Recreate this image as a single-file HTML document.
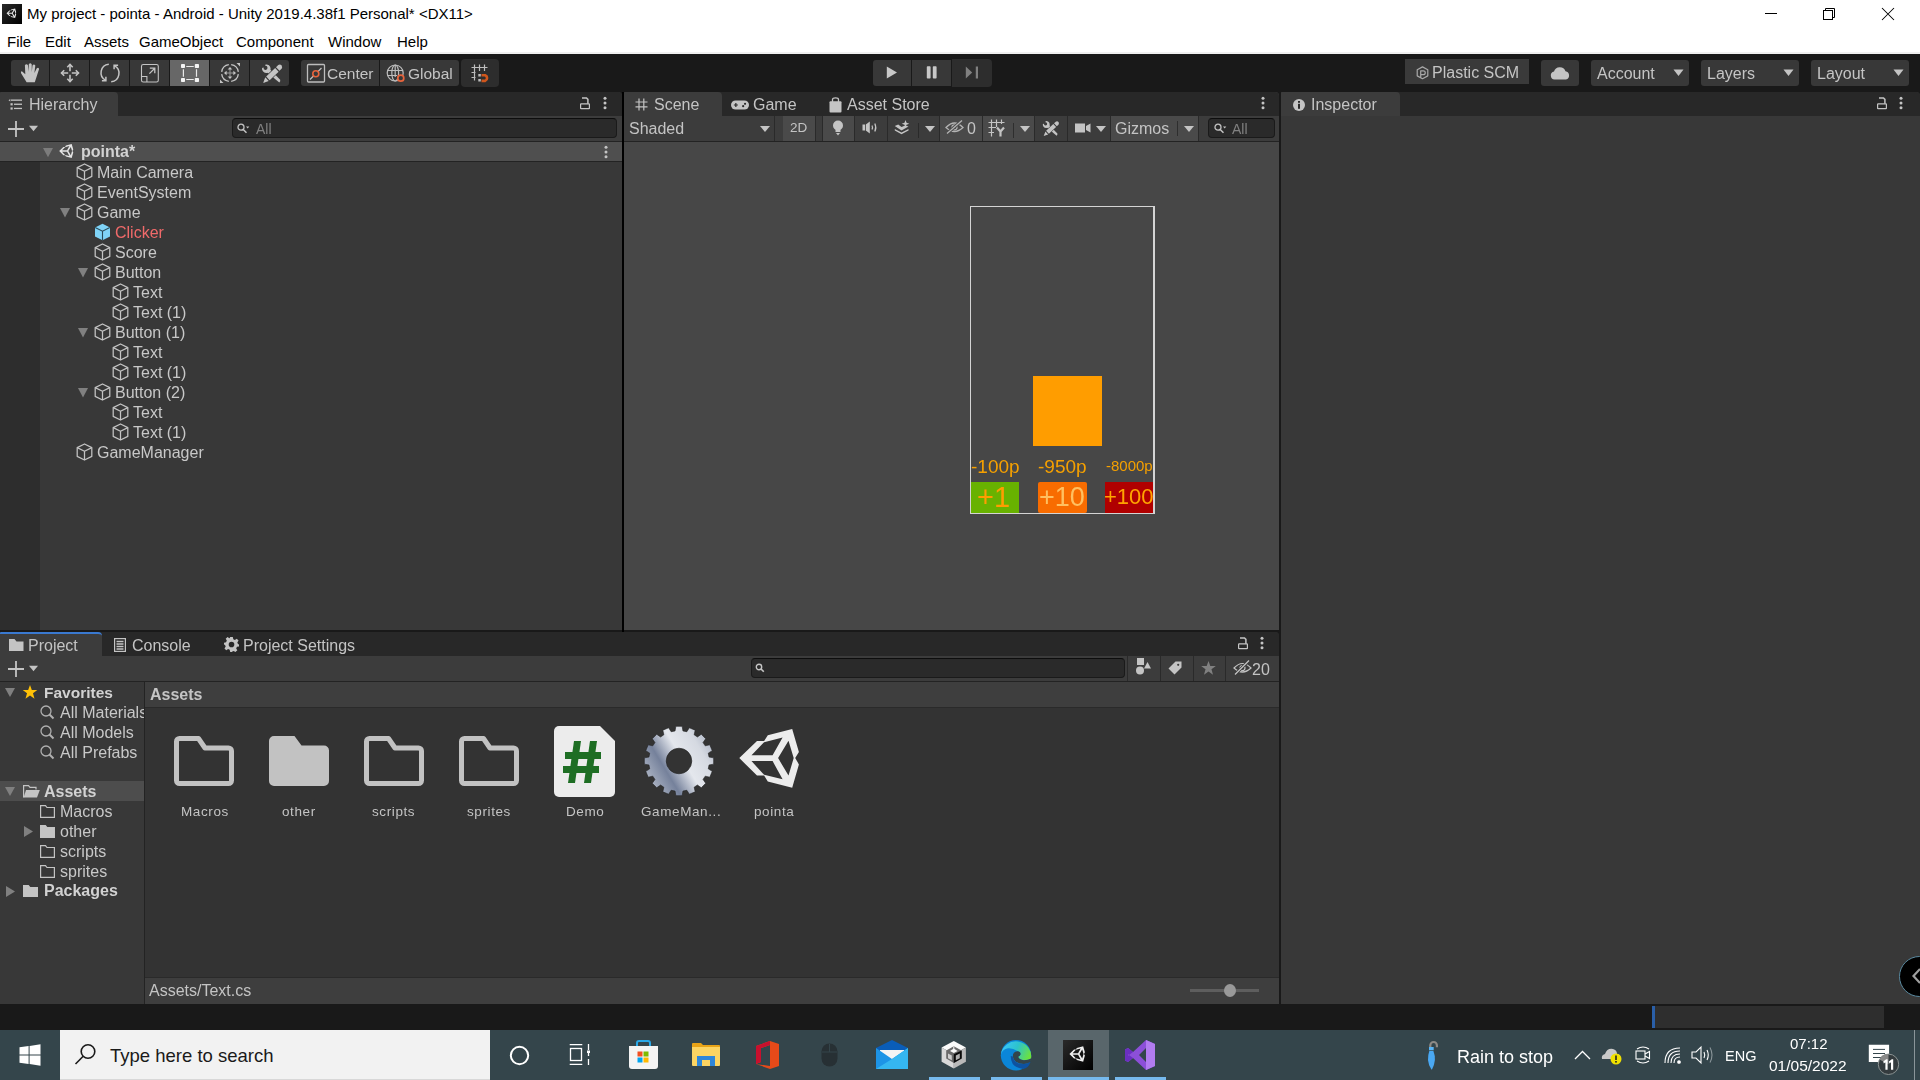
<!DOCTYPE html>
<html><head><meta charset="utf-8">
<style>
*{box-sizing:border-box}
html,body{margin:0;padding:0}
body{width:1920px;height:1080px;overflow:hidden;position:relative;background:#191919;font-family:"Liberation Sans",sans-serif;color:#c4c4c4}
.a{position:absolute}
.t{position:absolute;white-space:pre;line-height:1}
svg{position:absolute;overflow:visible;z-index:2}
.t{z-index:2;will-change:transform}
#titlebar{left:0;top:0;width:1920px;height:54px;background:#fff}
#toolbar{left:0;top:54px;width:1920px;height:38px;background:#191919}
.tb{position:absolute;top:60px;height:26px;background:#383838}
.dock{position:absolute;background:#282828;border-radius:1px 4px 0 0;overflow:hidden}
.tab{position:absolute;top:0;height:24px;background:#3c3c3c;border-radius:0 4px 0 0}
.ptool{position:absolute;left:0;right:0;top:24px;height:26px;background:#3c3c3c;border-bottom:1px solid #232323}
.lbl{font-size:16px;color:#c4c4c4}
</style></head>
<body>
<div id="titlebar" class="a"></div>
<div class="a" style="left:0;top:52px;width:1920px;height:2px;background:#f0f0f0"></div>
<!-- unity app icon -->
<div class="a" style="left:2px;top:4px;width:20px;height:20px;background:linear-gradient(135deg,#2a2a2a,#000)"></div>
<svg style="left:5.4px;top:7.2px" width="13" height="13" viewBox="0 0 80 80" fill="#e8e8e8"><use href="#unity"/></svg>
<div class="t" style="left:27px;top:6px;font-size:15px;color:#000;will-change:auto">My project - pointa - Android - Unity 2019.4.38f1 Personal* &lt;DX11&gt;</div>
<div class="t" style="left:7px;top:34px;font-size:15px;color:#000;will-change:auto">File</div>
<div class="t" style="left:45px;top:34px;font-size:15px;color:#000;will-change:auto">Edit</div>
<div class="t" style="left:84px;top:34px;font-size:15px;color:#000;will-change:auto">Assets</div>
<div class="t" style="left:139px;top:34px;font-size:15px;color:#000;will-change:auto">GameObject</div>
<div class="t" style="left:236px;top:34px;font-size:15px;color:#000;will-change:auto">Component</div>
<div class="t" style="left:328px;top:34px;font-size:15px;color:#000;will-change:auto">Window</div>
<div class="t" style="left:397px;top:34px;font-size:15px;color:#000;will-change:auto">Help</div>

<div id="toolbar" class="a"></div>
<div class="tb" style="left:11px;width:38px;border-radius:3px 0 0 3px"></div>
<div class="tb" style="left:50px;width:39px"></div>
<div class="tb" style="left:90px;width:39px"></div>
<div class="tb" style="left:130px;width:39px"></div>
<div class="tb" style="left:170px;width:39px;background:#676767"></div>
<div class="tb" style="left:210px;width:39px"></div>
<div class="tb" style="left:250px;width:39px;border-radius:0 3px 3px 0"></div>
<div class="tb" style="left:301px;width:78px;border-radius:3px 0 0 3px"></div>
<div class="tb" style="left:380px;width:79px;border-radius:0 3px 3px 0"></div>
<div class="tb" style="left:461px;width:38px;top:59px;height:28px;background:#2d2d2d;border-radius:4px"></div>
<div class="t lbl" style="left:327px;top:66px;font-size:15.5px">Center</div>
<div class="t lbl" style="left:408px;top:66px;font-size:15.5px">Global</div>
<!-- toolbar icons -->
<svg style="left:20px;top:63px" width="20" height="20" viewBox="0 0 20 20"><path fill="#c4c4c4" d="M6.6 19.2L1.1 10.2Q0.4 8.5 1.9 8.3L5.3 11.2L4.9 2.2Q6.3 0.2 7.9 2.1L8.4 8.8L8.8 1.3Q10.2 -0.6 11.7 1.3L11.8 8.9L12.5 2.5Q14 0.6 15.3 2.6L14.4 10L16.8 5.3Q18.4 4 19.1 6L14.8 19.2Z"/></svg>
<svg style="left:60px;top:63px" width="20" height="20" viewBox="0 0 20 20" fill="none" stroke="#c4c4c4" stroke-width="1.6"><path d="M10 1.5V8.2M10 11.8V18.5M1.5 10H8.2M11.8 10H18.5"/><path d="M7.3 4.2L10 1.5L12.7 4.2M7.3 15.8L10 18.5L12.7 15.8M4.2 7.3L1.5 10L4.2 12.7M15.8 7.3L18.5 10L15.8 12.7"/></svg>
<svg style="left:100px;top:63px" width="20" height="20" viewBox="0 0 20 20" fill="none" stroke="#c4c4c4" stroke-width="1.5"><path d="M8.8 1.3 A8.5 8.5 0 0 0 5.8 17.4"/><path d="M1.9 17.7H5.9V13.7"/><path d="M11.2 18.7 A8.5 8.5 0 0 0 14.2 2.6"/><path d="M18.1 2.3H14.1V6.3"/></svg>
<svg style="left:140px;top:63px" width="20" height="20" viewBox="0 0 20 20" fill="none" stroke="#c4c4c4" stroke-width="1.1"><rect x="1.5" y="1.5" width="16.8" height="17.5" rx="1.8"/><path d="M1.5 13.5H6.9V19"/><path d="M9.4 10.6L14.8 5.2M9.8 5.2H14.8V10.2" stroke-width="1.3"/></svg>
<svg style="left:180px;top:63px" width="20" height="20" viewBox="0 0 20 20"><path d="M6.25 3.5H13.75M6.25 16.5H13.75M3.4 6.25V13.75M16.5 6.25V13.75" stroke="#e8e8e8" stroke-width="1.2" fill="none"/><g fill="#f4f4f4"><rect x="1" y="1" width="4" height="4" rx="0.8"/><rect x="14.8" y="1" width="4.2" height="4" rx="0.8"/><rect x="1" y="15" width="4" height="4" rx="0.8"/><rect x="14.8" y="15" width="4.2" height="4" rx="0.8"/></g></svg>
<svg style="left:220px;top:63px" width="20" height="20" viewBox="0 0 20 20"><circle cx="10" cy="10" r="8.4" fill="none" stroke="#c4c4c4" stroke-width="1.3" pathLength="54" stroke-dasharray="11 2.5" stroke-dashoffset="-1.25"/><path d="M10 5V15M5 10H15" stroke="#9a9a9a" stroke-width="1"/><g fill="#c4c4c4"><path d="M10 4L12.3 6.6H7.7Z"/><path d="M10 16L12.3 13.4H7.7Z"/><path d="M4 10L6.6 7.7V12.3Z"/><path d="M16 10L13.4 7.7V12.3Z"/><path d="M16.5 0L20 0V3.5Z"/><path d="M0 16.5V20H3.5Z"/></g></svg>
<svg style="left:261px;top:63px" width="20" height="20" viewBox="0 0 20 20"><g fill="#c4c4c4"><path d="M4.55 1.47A4.3 4.3 0 1 1 1.07 4.95L2.53 4.55A2 2 0 1 0 4.15 2.93Z"/><path d="M6.2 9.4L9.1 6.6L19.2 16.8Q19.6 18.3 18.3 19.6Z"/></g><g fill="#c4c4c4" stroke="#383838" stroke-width="1.3" paint-order="stroke" stroke-linejoin="round"><path d="M2.1 19.9L4.32 14.35L7.76 17.98Z"/><path d="M8.61 17.17L5.17 13.54L14.18 5.0L17.62 8.64Z"/><path d="M18.47 7.8L15.03 4.2L17.2 2.1Q19.1 0.8 20.6 2.5Q21.8 4.2 20.6 5.8Z"/></g></svg>
<svg style="left:306px;top:63px" width="20" height="20" viewBox="0 0 20 20" fill="none"><rect x="1.5" y="1.5" width="17" height="17.5" rx="1" stroke="#bdbdbd" stroke-width="1.3"/><path d="M4 16.5L8 12.5M11.5 9L15.5 5" stroke="#bdbdbd" stroke-width="1.3"/><circle cx="9.8" cy="10.8" r="3" stroke="#e8643c" stroke-width="1.6"/></svg>
<svg style="left:386px;top:64px" width="20" height="20" viewBox="0 0 20 20" fill="none" stroke="#bdbdbd" stroke-width="1.2"><circle cx="9.2" cy="9" r="8"/><ellipse cx="9.2" cy="9" rx="3.4" ry="8"/><path d="M1.5 6.5H17M1.5 11.5H11M9.2 1V13"/><circle cx="14.8" cy="14.2" r="3" stroke="#e8643c" stroke-width="1.7" fill="#383838"/></svg>
<svg style="left:470px;top:63px" width="22" height="20" viewBox="0 0 22 20"><path d="M4.5 1.5V17.5M9.5 1.5V8M14.5 1.5V8M1.5 4.5H17.5M1.5 9.5H5.5M1.5 14.5H5.5" stroke="#bdbdbd" stroke-width="1.2" fill="none"/><rect x="8.3" y="11" width="2.5" height="2.5" fill="#bdbdbd"/><rect x="8.3" y="16" width="2.5" height="2.5" fill="#bdbdbd"/><path d="M11.5 12.2H15.2A3.1 3.1 0 0 1 15.2 17.9H11.5" stroke="#d0561c" stroke-width="2.6" fill="none"/></svg>
<svg style="left:886px;top:66.3px" width="12" height="13" viewBox="0 0 12 13"><path d="M0.8 0.5V12.5L11 6.5Z" fill="#c8c8c8"/></svg>
<svg style="left:926px;top:66.3px" width="12" height="13" viewBox="0 0 12 13"><rect x="0.8" y="0.3" width="3.8" height="12.2" rx="0.8" fill="#c8c8c8"/><rect x="6.8" y="0.3" width="3.8" height="12.2" rx="0.8" fill="#c8c8c8"/></svg>
<svg style="left:965px;top:66.3px" width="14" height="13" viewBox="0 0 14 13"><path d="M0.8 0.5V12.5L7.2 6.5Z" fill="#808080"/><rect x="10.8" y="0.5" width="2.2" height="12" fill="#808080"/></svg>
<svg style="left:1416px;top:66px" width="13" height="14" viewBox="0 0 16 17" fill="none" stroke="#a8a8a8" stroke-width="1.5" stroke-linejoin="round"><path d="M8 1L14.5 4.5V12L8 15.5L1.5 12V4.5Z"/><path d="M5.8 14V5.8H9A2.4 2.4 0 0 1 9 10.6H5.8"/></svg>
<svg style="left:1550px;top:66px" width="20" height="14" viewBox="0 0 20 14"><path fill="#c4c4c4" d="M4.5 13.5A4 4 0 0 1 4 5.6A6 6 0 0 1 15.5 5.3A4.2 4.2 0 0 1 16 13.5Z"/></svg>
<svg style="left:1673px;top:69px" width="11" height="8" viewBox="0 0 11 8"><path d="M0.5 0.5H10.5L5.5 7Z" fill="#c4c4c4"/></svg>
<svg style="left:1783px;top:69px" width="11" height="8" viewBox="0 0 11 8"><path d="M0.5 0.5H10.5L5.5 7Z" fill="#c4c4c4"/></svg>
<svg style="left:1893px;top:69px" width="11" height="8" viewBox="0 0 11 8"><path d="M0.5 0.5H10.5L5.5 7Z" fill="#c4c4c4"/></svg>
<!-- window controls -->
<div class="a" style="left:1765px;top:13px;width:12px;height:1px;background:#000"></div>
<svg style="left:1822px;top:7px" width="14" height="14" viewBox="0 0 14 14" fill="none" stroke="#000" stroke-width="1"><rect x="1.5" y="3.5" width="9" height="9"/><path d="M3.5 3.5V1.5H12.5V10.5H10.5"/></svg>
<svg style="left:1881px;top:7px" width="14" height="14" viewBox="0 0 14 14" stroke="#000" stroke-width="1.05"><path d="M1 1L13 13M13 1L1 13"/></svg>

<div class="tb" style="left:873px;width:38px;border-radius:3px 0 0 3px"></div>
<div class="tb" style="left:912px;width:39px"></div>
<div class="tb" style="left:952px;width:40px;top:59px;height:28px;background:#2d2d2d;border-radius:0 4px 4px 0"></div>

<div class="tb" style="left:1405px;width:124px;top:59px;height:25px;background:#3a3a3a"></div>
<div class="tb" style="left:1541px;width:38px;border-radius:3px"></div>
<div class="tb" style="left:1591px;width:98px;border-radius:3px"></div>
<div class="tb" style="left:1701px;width:98px;border-radius:3px"></div>
<div class="tb" style="left:1811px;width:98px;border-radius:3px"></div>
<div class="t lbl" style="left:1432px;top:65px">Plastic SCM</div>
<div class="t lbl" style="left:1597px;top:66px">Account</div>
<div class="t lbl" style="left:1707px;top:66px">Layers</div>
<div class="t lbl" style="left:1817px;top:66px">Layout</div>

<!-- Hierarchy dock -->
<div class="dock" style="left:0;top:92px;width:622px;height:538px;background:#383838">
  <div class="a" style="left:0;top:0;width:622px;height:24px;background:#282828"></div>
  <div class="tab" style="left:0;width:118px"></div>
  <div class="ptool"></div>
  <div class="a" style="left:0;top:50px;width:622px;height:20px;background:#4f4f4f;border-bottom:1px solid #232323"></div>
  <div class="a" style="left:0;top:70px;width:40px;height:468px;background:#2d2d2d"></div>
</div>
<div class="t lbl" style="left:29px;top:97px">Hierarchy</div>
<svg style="left:0;top:0" width="0" height="0"><defs>
<symbol id="cube" viewBox="0 0 17 18"><g fill="none" stroke="#c4c4c4" stroke-width="1.25" stroke-linejoin="round"><path d="M8.5 1L15.8 4.6V13.4L8.5 17L1.2 13.4V4.6Z"/><path d="M1.2 4.6L8.5 8.2L15.8 4.6M8.5 8.2V17"/></g></symbol>
<symbol id="cubeb" viewBox="0 0 17 18"><path d="M8.5 0.8L16 4.5V13.6L8.5 17.3L1 13.6V4.5Z" fill="#7fd3f7"/><path d="M1.2 4.6L8.5 8.2L15.8 4.6M8.5 8.2V17" fill="none" stroke="#2a4a58" stroke-width="1.1"/></symbol>
<symbol id="unity" viewBox="0 0 80 80"><path fill-rule="evenodd" d="M9.3 38.1L27 21.1H34.1L37.8 15.2L62.2 8.9L68.9 31.9L65.2 38.1L68.9 44.4L62.2 67.8L37.8 61.5L34.1 55.6H27Z M21.5 35.2L34.1 22.2L52.6 17.4L42.6 35.2Z M48.1 38.1L58.5 20.7L63.7 38.1L58.5 55.6Z M21.5 41.1H42.6L52.6 59.3L34.1 54.8Z"/></symbol>
</defs></svg>
<!-- hierarchy tab icon -->
<svg style="left:8px;top:99px" width="15" height="11" viewBox="0 0 15 11"><path d="M0.5 1.2L2.3 0V2.4Z" fill="#c4c4c4"/><rect x="3" y="0.5" width="11" height="1.3" fill="#c4c4c4"/><rect x="2.5" y="4.2" width="2.2" height="2.2" fill="#c4c4c4"/><rect x="6" y="4.6" width="8" height="1.3" fill="#c4c4c4"/><rect x="2.5" y="8.4" width="2.2" height="2.2" fill="#c4c4c4"/><rect x="6" y="8.8" width="8" height="1.3" fill="#c4c4c4"/></svg>
<!-- lock + menu -->
<svg style="left:579px;top:96px" width="12" height="14" viewBox="0 0 12 14" fill="none" stroke="#c4c4c4" stroke-width="1.2"><rect x="1.6" y="7.8" width="8.8" height="4.9" rx="0.5"/><path d="M3 2H7.5L8.9 3.4V7.8" stroke-width="1.5"/></svg>
<svg style="left:602px;top:96px" width="6" height="14" viewBox="0 0 6 14" fill="#c4c4c4"><circle cx="3" cy="2.3" r="1.5"/><circle cx="3" cy="7" r="1.5"/><circle cx="3" cy="11.7" r="1.5"/></svg>
<svg style="left:603px;top:145px" width="6" height="14" viewBox="0 0 6 14" fill="#c4c4c4"><circle cx="3" cy="2.3" r="1.5"/><circle cx="3" cy="7" r="1.5"/><circle cx="3" cy="11.7" r="1.5"/></svg>
<!-- plus dropdown -->
<svg style="left:8px;top:121px" width="32" height="16" viewBox="0 0 32 16"><path d="M8 0V16M0 8H16" stroke="#c4c4c4" stroke-width="1.8"/><path d="M21 4.8H30L25.5 10.2Z" fill="#c4c4c4"/></svg>
<!-- search field -->
<div class="a" style="left:232px;top:118px;width:385px;height:20px;background:#2a2a2a;border:1px solid #1a1a1a;border-top-color:#0d0d0d;border-radius:4px"></div>
<svg style="left:236px;top:123px" width="14" height="11" viewBox="0 0 14 11"><circle cx="5" cy="4.2" r="3" fill="none" stroke="#c4c4c4" stroke-width="1.3"/><path d="M7 6.3L10.5 9.8" stroke="#c4c4c4" stroke-width="1.5"/><path d="M10 3.5H13.3L11.65 5.5Z" fill="#c4c4c4"/></svg>
<div class="t" style="left:256px;top:122px;font-size:14px;color:#808080">All</div>
<!-- pointa row -->
<svg style="left:43px;top:148px" width="10" height="10" viewBox="0 0 10 10"><path d="M0 0H10L5 9.3Z" fill="#7c7c7c"/></svg>
<svg style="left:56.6px;top:142.1px" width="18.9" height="18.9" viewBox="0 0 80 80" fill="#e4e4e4"><use href="#unity"/></svg>
<div class="t" style="left:81px;top:144px;font-size:16px;font-weight:700;color:#d2d2d2">pointa*</div>
<svg style="left:76px;top:163px" width="17" height="18" viewBox="0 0 17 18"><use href="#cube"/></svg>
<div class="t" style="left:97px;top:165px;font-size:16px;color:#c8c8c8">Main Camera</div>
<svg style="left:76px;top:183px" width="17" height="18" viewBox="0 0 17 18"><use href="#cube"/></svg>
<div class="t" style="left:97px;top:185px;font-size:16px;color:#c8c8c8">EventSystem</div>
<svg style="left:60px;top:208px" width="10" height="10" viewBox="0 0 10 10"><path d="M0 0H10L5 9.5Z" fill="#808080"/></svg>
<svg style="left:76px;top:203px" width="17" height="18" viewBox="0 0 17 18"><use href="#cube"/></svg>
<div class="t" style="left:97px;top:205px;font-size:16px;color:#c8c8c8">Game</div>
<svg style="left:94px;top:223px" width="17" height="18" viewBox="0 0 17 18"><use href="#cubeb"/></svg>
<div class="t" style="left:115px;top:225px;font-size:16px;color:#f06a6a">Clicker</div>
<svg style="left:94px;top:243px" width="17" height="18" viewBox="0 0 17 18"><use href="#cube"/></svg>
<div class="t" style="left:115px;top:245px;font-size:16px;color:#c8c8c8">Score</div>
<svg style="left:78px;top:268px" width="10" height="10" viewBox="0 0 10 10"><path d="M0 0H10L5 9.5Z" fill="#808080"/></svg>
<svg style="left:94px;top:263px" width="17" height="18" viewBox="0 0 17 18"><use href="#cube"/></svg>
<div class="t" style="left:115px;top:265px;font-size:16px;color:#c8c8c8">Button</div>
<svg style="left:112px;top:283px" width="17" height="18" viewBox="0 0 17 18"><use href="#cube"/></svg>
<div class="t" style="left:133px;top:285px;font-size:16px;color:#c8c8c8">Text</div>
<svg style="left:112px;top:303px" width="17" height="18" viewBox="0 0 17 18"><use href="#cube"/></svg>
<div class="t" style="left:133px;top:305px;font-size:16px;color:#c8c8c8">Text (1)</div>
<svg style="left:78px;top:328px" width="10" height="10" viewBox="0 0 10 10"><path d="M0 0H10L5 9.5Z" fill="#808080"/></svg>
<svg style="left:94px;top:323px" width="17" height="18" viewBox="0 0 17 18"><use href="#cube"/></svg>
<div class="t" style="left:115px;top:325px;font-size:16px;color:#c8c8c8">Button (1)</div>
<svg style="left:112px;top:343px" width="17" height="18" viewBox="0 0 17 18"><use href="#cube"/></svg>
<div class="t" style="left:133px;top:345px;font-size:16px;color:#c8c8c8">Text</div>
<svg style="left:112px;top:363px" width="17" height="18" viewBox="0 0 17 18"><use href="#cube"/></svg>
<div class="t" style="left:133px;top:365px;font-size:16px;color:#c8c8c8">Text (1)</div>
<svg style="left:78px;top:388px" width="10" height="10" viewBox="0 0 10 10"><path d="M0 0H10L5 9.5Z" fill="#808080"/></svg>
<svg style="left:94px;top:383px" width="17" height="18" viewBox="0 0 17 18"><use href="#cube"/></svg>
<div class="t" style="left:115px;top:385px;font-size:16px;color:#c8c8c8">Button (2)</div>
<svg style="left:112px;top:403px" width="17" height="18" viewBox="0 0 17 18"><use href="#cube"/></svg>
<div class="t" style="left:133px;top:405px;font-size:16px;color:#c8c8c8">Text</div>
<svg style="left:112px;top:423px" width="17" height="18" viewBox="0 0 17 18"><use href="#cube"/></svg>
<div class="t" style="left:133px;top:425px;font-size:16px;color:#c8c8c8">Text (1)</div>
<svg style="left:76px;top:443px" width="17" height="18" viewBox="0 0 17 18"><use href="#cube"/></svg>
<div class="t" style="left:97px;top:445px;font-size:16px;color:#c8c8c8">GameManager</div>

<div class="a" style="left:622px;top:92px;width:2px;height:540px;background:#000"></div>
<!-- Scene dock -->
<div class="dock" style="left:624px;top:92px;width:655px;height:538px;background:#474747">
  <div class="a" style="left:0;top:0;width:655px;height:24px;background:#282828"></div>
  <div class="tab" style="left:0;width:98px"></div>
  <div class="ptool"></div>
</div>
<div class="t lbl" style="left:654px;top:97px">Scene</div>
<div class="t lbl" style="left:753px;top:97px">Game</div>
<div class="t lbl" style="left:847px;top:97px">Asset Store</div>
<svg style="left:635px;top:98px" width="13" height="13" viewBox="0 0 13 13" stroke="#c4c4c4" stroke-width="1.2"><path d="M4 0.5V12.5M8.8 0.5V12.5M0.5 4H12.5M0.5 8.8H12.5"/></svg>
<svg style="left:731px;top:100px" width="18" height="10" viewBox="0 0 20 11"><path d="M5 0.5H15A4.7 4.7 0 0 1 15 10.5H5A4.7 4.7 0 0 1 5 0.5Z" fill="#c4c4c4"/><path d="M3.2 5.5H7.6M5.4 3.3V7.7" stroke="#282828" stroke-width="1.3"/><circle cx="13.5" cy="6.8" r="1.2" fill="#282828"/><circle cx="15.6" cy="4.2" r="1.2" fill="#282828"/></svg>
<svg style="left:829px;top:97px" width="13" height="16" viewBox="0 0 13 16"><rect x="0.5" y="4.2" width="12" height="11.3" rx="1" fill="#c4c4c4"/><path d="M3.5 6V2.5Q3.5 0.8 6.5 0.8Q9.5 0.8 9.5 2.5V6" fill="none" stroke="#c4c4c4" stroke-width="1.3"/></svg>
<svg style="left:1260px;top:96px" width="6" height="14" viewBox="0 0 6 14" fill="#c4c4c4"><circle cx="3" cy="2.3" r="1.5"/><circle cx="3" cy="7" r="1.5"/><circle cx="3" cy="11.7" r="1.5"/></svg>
<!-- scene toolbar -->
<div class="a" style="left:774px;top:116px;width:1px;height:25px;background:#2a2a2a"></div>
<div class="a" style="left:783px;top:116px;width:32px;height:25px;background:#4a4a4a"></div>
<div class="a" style="left:815px;top:116px;width:1px;height:25px;background:#2a2a2a"></div>
<div class="a" style="left:822px;top:116px;width:1px;height:25px;background:#2a2a2a"></div>
<div class="a" style="left:823px;top:116px;width:31px;height:25px;background:#4a4a4a"></div>
<div class="a" style="left:854px;top:116px;width:1px;height:25px;background:#2a2a2a"></div>
<div class="a" style="left:887px;top:116px;width:1px;height:25px;background:#2a2a2a"></div>
<div class="a" style="left:939px;top:116px;width:1px;height:25px;background:#2a2a2a"></div>
<div class="a" style="left:940px;top:116px;width:42px;height:25px;background:#4a4a4a"></div>
<div class="a" style="left:982px;top:116px;width:1px;height:25px;background:#2a2a2a"></div>
<div class="a" style="left:983px;top:116px;width:51px;height:25px;background:#4a4a4a"></div>
<div class="a" style="left:1034px;top:116px;width:1px;height:25px;background:#2a2a2a"></div>
<div class="a" style="left:1067px;top:116px;width:1px;height:25px;background:#2a2a2a"></div>
<div class="a" style="left:1110px;top:116px;width:1px;height:25px;background:#2a2a2a"></div>
<div class="a" style="left:1111px;top:116px;width:87px;height:25px;background:#4a4a4a"></div>
<div class="a" style="left:1198px;top:116px;width:1px;height:25px;background:#2a2a2a"></div>
<div class="a" style="left:918px;top:123px;width:1px;height:15px;background:#2a2a2a"></div>
<div class="a" style="left:1013px;top:123px;width:1px;height:15px;background:#2e2e2e"></div>
<div class="a" style="left:1177px;top:121px;width:1px;height:15px;background:#2e2e2e"></div>
<div class="t lbl" style="left:629px;top:121px">Shaded</div>
<svg style="left:760px;top:126px" width="10" height="6" viewBox="0 0 10 6"><path d="M0 0H10L5 6Z" fill="#c4c4c4"/></svg>
<div class="t" style="left:790px;top:121px;font-size:13.5px;color:#c4c4c4">2D</div>
<svg style="left:832px;top:120px" width="12" height="16" viewBox="0 0 12 16"><circle cx="6" cy="5.5" r="5" fill="#c4c4c4"/><rect x="3.5" y="9" width="5" height="3" fill="#c4c4c4"/><path d="M4 13H8L6 15.5Z" fill="#c4c4c4"/></svg>
<svg style="left:862px;top:121px" width="16" height="13" viewBox="0 0 16 13"><rect x="0.5" y="3.5" width="2.5" height="6" fill="#c4c4c4"/><path d="M3.8 3.5L7.8 0.5V12.5L3.8 9.5Z" fill="#c4c4c4"/><path d="M10 4.5Q11 6.5 10 8.5M12.8 2.5Q14.8 6.5 12.8 10.5" fill="none" stroke="#c4c4c4" stroke-width="1.2"/></svg>
<svg style="left:894px;top:120px" width="16" height="15" viewBox="0 0 16 15"><path d="M0.8 9L7.5 12.5L14.5 9L14.5 10.5L7.5 14.2L0.8 10.5Z M0.8 6L4.2 4.5L7.5 7L11.2 5.5L14.5 6.5L7.5 10.5Z" fill="#c4c4c4"/><path d="M11.5 0L12.5 2.8L15.3 3.8L12.5 4.8L11.5 7.6L10.5 4.8L7.7 3.8L10.5 2.8Z" fill="#c4c4c4"/></svg>
<svg style="left:925px;top:126px" width="10" height="6" viewBox="0 0 10 6"><path d="M0 0H10L5 6Z" fill="#c4c4c4"/></svg>
<svg style="left:945px;top:120px" width="20" height="14" viewBox="0 0 20 14" fill="none" stroke="#b4b4b4" stroke-width="1.3"><path d="M1 7.5Q9.5 -1.5 18 7.5Q9.5 15.5 1 7.5Z"/><circle cx="9.5" cy="7.3" r="2.5"/><path d="M2 13.5L17 0.5" stroke="#4a4a4a" stroke-width="3"/><path d="M2 13.5L17 0.5"/></svg>
<div class="t" style="left:967px;top:121px;font-size:16px;color:#c4c4c4">0</div>
<svg style="left:988px;top:119px" width="18" height="18" viewBox="0 0 18 18" fill="none" stroke="#c4c4c4" stroke-width="1.2"><path d="M3.5 0.5V17.5M8.5 0.5V8M13.5 0.5V5M0.5 3.5H16.5M0.5 8.5H8M0.5 13.5H6"/><path d="M9 8.5L12.5 12.5L16 8.5M12.5 12.5V17.5" stroke-width="2.2"/></svg>
<svg style="left:1020px;top:126px" width="10" height="6" viewBox="0 0 10 6"><path d="M0 0H10L5 6Z" fill="#c4c4c4"/></svg>
<svg style="left:1042px;top:120px" width="16" height="16" viewBox="0 0 20 20"><g fill="#c4c4c4"><path d="M4.55 1.47A4.3 4.3 0 1 1 1.07 4.95L2.53 4.55A2 2 0 1 0 4.15 2.93Z"/><path d="M6.2 9.4L9.1 6.6L19.2 16.8Q19.6 18.3 18.3 19.6Z"/></g><g fill="#c4c4c4" stroke="#3c3c3c" stroke-width="1.3" paint-order="stroke" stroke-linejoin="round"><path d="M2.1 19.9L4.32 14.35L7.76 17.98Z"/><path d="M8.61 17.17L5.17 13.54L14.18 5.0L17.62 8.64Z"/><path d="M18.47 7.8L15.03 4.2L17.2 2.1Q19.1 0.8 20.6 2.5Q21.8 4.2 20.6 5.8Z"/></g></svg>
<svg style="left:1075px;top:123px" width="16" height="10" viewBox="0 0 16 10"><rect x="0" y="0.5" width="10" height="9" fill="#c4c4c4"/><path d="M11 3L15.5 0.5V9.5L11 7Z" fill="#c4c4c4"/></svg>
<svg style="left:1096px;top:126px" width="10" height="6" viewBox="0 0 10 6"><path d="M0 0H10L5 6Z" fill="#c4c4c4"/></svg>
<div class="t lbl" style="left:1115px;top:121px">Gizmos</div>
<svg style="left:1184px;top:126px" width="10" height="6" viewBox="0 0 10 6"><path d="M0 0H10L5 6Z" fill="#c4c4c4"/></svg>
<div class="a" style="left:1208px;top:118px;width:67px;height:20px;background:#2a2a2a;border:1px solid #1a1a1a;border-top-color:#0d0d0d;border-radius:4px"></div>
<svg style="left:1213px;top:123px" width="14" height="11" viewBox="0 0 14 11"><circle cx="5" cy="4.2" r="3" fill="none" stroke="#c4c4c4" stroke-width="1.3"/><path d="M7 6.3L10.5 9.8" stroke="#c4c4c4" stroke-width="1.5"/><path d="M10 3.5H13.3L11.65 5.5Z" fill="#c4c4c4"/></svg>
<div class="t" style="left:1232px;top:122px;font-size:14px;color:#808080">All</div>
<!-- scene content -->
<div class="a" style="left:970px;top:206px;width:185px;height:308px;border:1px solid #d4d4d4;border-right-width:2px"></div>
<div class="a" style="left:1033px;top:376px;width:69px;height:70px;background:#ff9d00"></div>
<div class="t" style="left:970.5px;top:456.5px;font-size:19px;color:#f5a000">-100p</div>
<div class="t" style="left:1037.5px;top:456.5px;font-size:19px;color:#f5a000">-950p</div>
<div class="t" style="left:1105.5px;top:458px;font-size:15px;color:#f5a000">-8000p</div>
<div class="a" style="left:971px;top:482px;width:48px;height:31px;background:#68b200"></div>
<div class="a" style="left:1038px;top:482px;width:49px;height:31px;background:#f86c00;border-radius:2px"></div>
<div class="a" style="left:1105px;top:482px;width:48px;height:31px;background:#b00000"></div>
<div class="t" style="left:977px;top:482.5px;font-size:29px;color:#ff9d00">+1</div>
<div class="t" style="left:1038.5px;top:483.5px;font-size:27px;color:#ffc060">+10</div>
<div class="t" style="left:1104px;top:486px;font-size:22px;color:#ffa400">+100</div>

<!-- Inspector dock -->
<div class="dock" style="left:1281px;top:92px;width:639px;height:912px;background:#383838">
  <div class="a" style="left:0;top:0;width:639px;height:24px;background:#282828"></div>
  <div class="tab" style="left:0;width:119px"></div>
</div>
<div class="t lbl" style="left:1311px;top:97px">Inspector</div>

<!-- Project dock -->
<div class="dock" style="left:0;top:632px;width:1279px;height:372px;background:#333333">
  <div class="a" style="left:0;top:0;width:1279px;height:24px;background:#282828"></div>
  <div class="tab" style="left:0;width:102px;border-top:2px solid #3a79d0"></div>
  <div class="ptool"></div>
  <div class="a" style="left:0;top:50px;width:144px;height:322px;background:#383838"></div>
  <div class="a" style="left:144px;top:50px;width:1px;height:322px;background:#232323"></div>
  <div class="a" style="left:145px;top:50px;width:1134px;height:26px;background:#3e3e3e;border-bottom:1px solid #2a2a2a"></div>
  <div class="a" style="left:145px;top:345px;width:1134px;height:27px;background:#3e3e3e;border-top:1px solid #2a2a2a"></div>
</div>
<div class="t lbl" style="left:28px;top:637.7px">Project</div>
<div class="t lbl" style="left:132px;top:637.7px">Console</div>
<div class="t lbl" style="left:243px;top:637.7px">Project Settings</div>
<svg style="left:9px;top:639px" width="15" height="12" viewBox="0 0 15 12"><path d="M0 0H5.5L7.5 2.5H14.5V12H0Z" fill="#c4c4c4"/></svg>
<svg style="left:114px;top:638px" width="12" height="14" viewBox="0 0 12 14"><rect x="0.6" y="0.6" width="10.8" height="12.8" fill="none" stroke="#c4c4c4" stroke-width="1.2"/><path d="M2.5 3.5H9.5M2.5 6H9.5M2.5 8.5H9.5M2.5 11H9.5" stroke="#c4c4c4" stroke-width="1.3"/></svg>
<svg style="left:224px;top:637px" width="15" height="15" viewBox="0 0 16 16"><path fill="#c4c4c4" fill-rule="evenodd" d="M6.6 0H9.4L9.9 2.3L11.6 3.1L13.6 1.8L15.5 3.8L14.2 5.8L14.9 7.5L16 8V10L13.8 10.5L13 12.2L14.2 14.2L12.2 16L10.3 14.8L8.9 15.4L8.4 16H6.6L6.1 13.7L4.4 12.9L2.4 14.2L0.5 12.2L1.8 10.2L1.1 8.5L0 8V6L2.2 5.5L3 3.8L1.8 1.8L3.8 0L5.7 1.2L6.1 1ZM8 5A3 3 0 1 0 8 11A3 3 0 1 0 8 5Z"/></svg>
<svg style="left:1237px;top:636px" width="12" height="14" viewBox="0 0 12 14" fill="none" stroke="#c4c4c4" stroke-width="1.2"><rect x="1.6" y="7.8" width="8.8" height="4.9" rx="0.5"/><path d="M3 2H7.5L8.9 3.4V7.8" stroke-width="1.5"/></svg>
<svg style="left:1259px;top:636px" width="6" height="14" viewBox="0 0 6 14" fill="#c4c4c4"><circle cx="3" cy="2.3" r="1.5"/><circle cx="3" cy="7" r="1.5"/><circle cx="3" cy="11.7" r="1.5"/></svg>
<svg style="left:8px;top:661px" width="32" height="16" viewBox="0 0 32 16"><path d="M8 0V16M0 8H16" stroke="#c4c4c4" stroke-width="1.8"/><path d="M21 4.8H30L25.5 10.2Z" fill="#c4c4c4"/></svg>
<div class="a" style="left:751px;top:658px;width:374px;height:20px;background:#2a2a2a;border:1px solid #1a1a1a;border-top-color:#0d0d0d;border-radius:4px"></div>
<svg style="left:755px;top:663px" width="10" height="10" viewBox="0 0 10 10"><circle cx="4" cy="4" r="2.7" fill="none" stroke="#c4c4c4" stroke-width="1.4"/><path d="M6 6L8.8 8.8" stroke="#c4c4c4" stroke-width="1.6"/></svg>
<div class="a" style="left:1127px;top:656px;width:1px;height:25px;background:#2a2a2a"></div>
<div class="a" style="left:1160px;top:656px;width:1px;height:25px;background:#2a2a2a"></div>
<div class="a" style="left:1193px;top:656px;width:1px;height:25px;background:#2a2a2a"></div>
<div class="a" style="left:1225px;top:656px;width:1px;height:25px;background:#2a2a2a"></div>
<svg style="left:1136px;top:658px" width="16" height="17" viewBox="0 0 16 17" fill="#c4c4c4"><rect x="1" y="0" width="7" height="7"/><circle cx="4" cy="12.5" r="4"/><path d="M11.5 4L15 10.5H8Z"/></svg>
<svg style="left:1168px;top:661px" width="14" height="14" viewBox="0 0 14 14"><path d="M7.5 0.5H13.5V6.5L6.5 13.5L0.5 7.5Z" fill="#c4c4c4"/><circle cx="10.2" cy="3.8" r="1.1" fill="#3c3c3c"/></svg>
<svg style="left:1201px;top:661px" width="15" height="14" viewBox="0 0 24 23"><path d="M12 0L15 8.3H24L16.9 13.6L19.4 22.5L12 17.3L4.6 22.5L7.1 13.6L0 8.3H9Z" fill="#808080"/></svg>
<svg style="left:1233px;top:660px" width="19" height="15" viewBox="0 0 19 15" fill="none" stroke="#c4c4c4" stroke-width="1.2"><path d="M1 8Q9.5 -1 18 8Q9.5 16 1 8Z"/><circle cx="9.5" cy="8" r="2.5"/><path d="M2 14.5L16 0.5" stroke="#3c3c3c" stroke-width="3"/><path d="M2 14.5L16 0.5"/></svg>
<div class="t" style="left:1252px;top:662px;font-size:16px;color:#c4c4c4">20</div>
<!-- project tree -->
<div class="a" style="left:0;top:781px;width:144px;height:20px;background:#4d4d4d"></div>
<svg style="left:5px;top:688px" width="10" height="9" viewBox="0 0 10 9"><path d="M0 0H10L5 9Z" fill="#808080"/></svg>
<svg style="left:22px;top:685px" width="16" height="14" viewBox="0 0 24 23"><path d="M12 0L15 8.3H24L16.9 13.6L19.4 22.5L12 17.3L4.6 22.5L7.1 13.6L0 8.3H9Z" fill="#ffc107"/></svg>
<div class="t" style="left:44px;top:684.5px;font-size:15.5px;font-weight:700;color:#d2d2d2">Favorites</div>
<svg style="left:40px;top:705px" width="15" height="15" viewBox="0 0 15 15"><circle cx="6" cy="6" r="5" fill="none" stroke="#b0b0b0" stroke-width="1.3"/><path d="M9.5 9.5L13.5 13.5" stroke="#b0b0b0" stroke-width="2"/></svg>
<svg style="left:40px;top:725px" width="15" height="15" viewBox="0 0 15 15"><circle cx="6" cy="6" r="5" fill="none" stroke="#b0b0b0" stroke-width="1.3"/><path d="M9.5 9.5L13.5 13.5" stroke="#b0b0b0" stroke-width="2"/></svg>
<svg style="left:40px;top:745px" width="15" height="15" viewBox="0 0 15 15"><circle cx="6" cy="6" r="5" fill="none" stroke="#b0b0b0" stroke-width="1.3"/><path d="M9.5 9.5L13.5 13.5" stroke="#b0b0b0" stroke-width="2"/></svg>
<div class="a" style="left:60px;top:701.5px;width:84px;height:60px;overflow:hidden">
<div class="t" style="left:0;top:3px;font-size:16px;color:#c8c8c8">All Materials</div>
<div class="t" style="left:0;top:23px;font-size:16px;color:#c8c8c8">All Models</div>
<div class="t" style="left:0;top:43px;font-size:16px;color:#c8c8c8">All Prefabs</div>
</div>
<svg style="left:5px;top:787px" width="10" height="9" viewBox="0 0 10 9"><path d="M0 0H10L5 9Z" fill="#808080"/></svg>
<svg style="left:23px;top:785px" width="17" height="13" viewBox="0 0 17 13"><path d="M0.6 12.4V0.6H5.5L7 2.3H13V4.5" fill="none" stroke="#c4c4c4" stroke-width="1.2"/><path d="M3 5H16.8L14 12.6H0.6Z" fill="#c4c4c4"/></svg>
<div class="t" style="left:44px;top:783.5px;font-size:16px;font-weight:700;color:#d2d2d2">Assets</div>
<svg style="left:40px;top:805px" width="15" height="13" viewBox="0 0 15 13"><path d="M0.6 12.4V0.6H5.5L7 2.5H14.4V12.4Z" fill="none" stroke="#c4c4c4" stroke-width="1.2"/></svg>
<div class="t" style="left:60px;top:803.5px;font-size:16px;color:#c8c8c8">Macros</div>
<svg style="left:24px;top:826px" width="9" height="11" viewBox="0 0 9 11"><path d="M0 0V11L9 5.5Z" fill="#808080"/></svg>
<svg style="left:40px;top:825px" width="15" height="13" viewBox="0 0 15 13"><path d="M0 0H5.7L7.3 2H15V13H0Z" fill="#c4c4c4"/></svg>
<div class="t" style="left:60px;top:823.5px;font-size:16px;color:#c8c8c8">other</div>
<svg style="left:40px;top:845px" width="15" height="13" viewBox="0 0 15 13"><path d="M0.6 12.4V0.6H5.5L7 2.5H14.4V12.4Z" fill="none" stroke="#c4c4c4" stroke-width="1.2"/></svg>
<div class="t" style="left:60px;top:843.5px;font-size:16px;color:#c8c8c8">scripts</div>
<svg style="left:40px;top:865px" width="15" height="13" viewBox="0 0 15 13"><path d="M0.6 12.4V0.6H5.5L7 2.5H14.4V12.4Z" fill="none" stroke="#c4c4c4" stroke-width="1.2"/></svg>
<div class="t" style="left:60px;top:863.5px;font-size:16px;color:#c8c8c8">sprites</div>
<svg style="left:6px;top:886px" width="9" height="11" viewBox="0 0 9 11"><path d="M0 0V11L9 5.5Z" fill="#808080"/></svg>
<svg style="left:23px;top:885px" width="15" height="12" viewBox="0 0 15 12"><path d="M0 0H5.7L7.3 2H15V12H0Z" fill="#c4c4c4"/></svg>
<div class="t" style="left:44px;top:883px;font-size:16px;font-weight:700;color:#d2d2d2">Packages</div>
<!-- breadcrumb -->
<div class="t" style="left:150px;top:687px;font-size:16px;font-weight:700;color:#c4c4c4">Assets</div>
<!-- asset grid -->
<svg style="left:173px;top:735px" width="62" height="52" viewBox="0 0 62 52"><path d="M6.5 3.5H25.5L32 13H55.5A3 3 0 0 1 58.5 16V45.5A3 3 0 0 1 55.5 48.5H6.5A3 3 0 0 1 3.5 45.5V6.5A3 3 0 0 1 6.5 3.5Z" fill="none" stroke="#c2c2c2" stroke-width="5" stroke-linejoin="round"/></svg>
<svg style="left:268px;top:735px" width="62" height="52" viewBox="0 0 62 52"><path d="M6 1H26.5L33.5 10.5H56A5 5 0 0 1 61 15.5V46A5 5 0 0 1 56 51H6A5 5 0 0 1 1 46V6A5 5 0 0 1 6 1Z" fill="#c2c2c2"/></svg>
<svg style="left:363px;top:735px" width="62" height="52" viewBox="0 0 62 52"><path d="M6.5 3.5H25.5L32 13H55.5A3 3 0 0 1 58.5 16V45.5A3 3 0 0 1 55.5 48.5H6.5A3 3 0 0 1 3.5 45.5V6.5A3 3 0 0 1 6.5 3.5Z" fill="none" stroke="#c2c2c2" stroke-width="5" stroke-linejoin="round"/></svg>
<svg style="left:458px;top:735px" width="62" height="52" viewBox="0 0 62 52"><path d="M6.5 3.5H25.5L32 13H55.5A3 3 0 0 1 58.5 16V45.5A3 3 0 0 1 55.5 48.5H6.5A3 3 0 0 1 3.5 45.5V6.5A3 3 0 0 1 6.5 3.5Z" fill="none" stroke="#c2c2c2" stroke-width="5" stroke-linejoin="round"/></svg>
<svg style="left:554px;top:726px" width="61" height="71" viewBox="0 0 61 71"><path d="M5 0H46L61 15V66A5 5 0 0 1 56 71H5A5 5 0 0 1 0 66V5A5 5 0 0 1 5 0Z" fill="#ececec"/><g fill="#1e6e24"><path d="M20 15H27L21 57H14Z"/><path d="M36 15H43L37 57H30Z"/><rect x="11" y="26" width="36" height="7"/><rect x="9" y="40" width="36" height="7"/></g></svg>
<svg style="left:643px;top:725px" width="72" height="72" viewBox="0 0 72 72"><defs><linearGradient id="gg" x1="0" y1="0.8" x2="1" y2="0.2"><stop offset="0" stop-color="#b8bfcc"/><stop offset="0.3" stop-color="#75819b"/><stop offset="0.55" stop-color="#e4e7ed"/><stop offset="0.8" stop-color="#d5d9e1"/><stop offset="1" stop-color="#a9b1c2"/></linearGradient></defs><path fill="url(#gg)" fill-rule="evenodd" stroke="#222" stroke-width="0.6" stroke-linejoin="round" d="M32.05 5.96 L32.85 1.34 L39.15 1.34 L39.95 5.96 L43.84 6.73 L46.35 2.77 L52.18 5.19 L51.15 9.76 L54.45 11.96 L58.28 9.26 L62.74 13.72 L60.04 17.55 L62.24 20.85 L66.81 19.82 L69.23 25.65 L65.27 28.16 L66.04 32.05 L70.66 32.85 L70.66 39.15 L66.04 39.95 L65.27 43.84 L69.23 46.35 L66.81 52.18 L62.24 51.15 L60.04 54.45 L62.74 58.28 L58.28 62.74 L54.45 60.04 L51.15 62.24 L52.18 66.81 L46.35 69.23 L43.84 65.27 L39.95 66.04 L39.15 70.66 L32.85 70.66 L32.05 66.04 L28.16 65.27 L25.65 69.23 L19.82 66.81 L20.85 62.24 L17.55 60.04 L13.72 62.74 L9.26 58.28 L11.96 54.45 L9.76 51.15 L5.19 52.18 L2.77 46.35 L6.73 43.84 L5.96 39.95 L1.34 39.15 L1.34 32.85 L5.96 32.05 L6.73 28.16 L2.77 25.65 L5.19 19.82 L9.76 20.85 L11.96 17.55 L9.26 13.72 L13.72 9.26 L17.55 11.96 L20.85 9.76 L19.82 5.19 L25.65 2.77 L28.16 6.73Z M36 23.2 A12.8 12.8 0 1 0 36 48.8 A12.8 12.8 0 1 0 36 23.2Z"/></svg>
<svg style="left:730px;top:720px" width="80" height="80" viewBox="0 0 80 80" fill="#ececec"><use href="#unity"/></svg>
<div class="t" style="left:181px;top:805px;font-size:13.5px;letter-spacing:0.6px;color:#c4c4c4">Macros</div>
<div class="t" style="left:282px;top:805px;font-size:13.5px;letter-spacing:0.6px;color:#c4c4c4">other</div>
<div class="t" style="left:372px;top:805px;font-size:13.5px;letter-spacing:0.6px;color:#c4c4c4">scripts</div>
<div class="t" style="left:467px;top:805px;font-size:13.5px;letter-spacing:0.6px;color:#c4c4c4">sprites</div>
<div class="t" style="left:566px;top:805px;font-size:13.5px;letter-spacing:0.6px;color:#c4c4c4">Demo</div>
<div class="t" style="left:641px;top:805px;font-size:13.5px;letter-spacing:0.6px;color:#c4c4c4">GameMan...</div>
<div class="t" style="left:754px;top:805px;font-size:13.5px;letter-spacing:0.6px;color:#c4c4c4">pointa</div>
<!-- bottom bar -->
<div class="t" style="left:149px;top:983px;font-size:16px;color:#c4c4c4">Assets/Text.cs</div>
<div class="a" style="left:1190px;top:989px;width:69px;height:3px;background:#5e5e5e"></div>
<div class="a" style="left:1224px;top:984px;width:12px;height:13px;border-radius:50%;background:#999"></div>
<!-- inspector icons -->
<svg style="left:1293px;top:99px" width="12" height="12" viewBox="0 0 12 12"><circle cx="6" cy="6" r="6" fill="#c4c4c4"/><rect x="5" y="4.8" width="2" height="5" fill="#2a2a2a"/><rect x="5" y="2" width="2" height="1.8" fill="#2a2a2a"/></svg>
<svg style="left:1876px;top:96px" width="12" height="14" viewBox="0 0 12 14" fill="none" stroke="#c4c4c4" stroke-width="1.2"><rect x="1.6" y="7.8" width="8.8" height="4.9" rx="0.5"/><path d="M3 2H7.5L8.9 3.4V7.8" stroke-width="1.5"/></svg>
<svg style="left:1898px;top:96px" width="6" height="14" viewBox="0 0 6 14" fill="#c4c4c4"><circle cx="3" cy="2.3" r="1.5"/><circle cx="3" cy="7" r="1.5"/><circle cx="3" cy="11.7" r="1.5"/></svg>
<!-- status bar -->
<div class="a" style="left:1652px;top:1006px;width:232px;height:22px;background:#2e2e2e;border-left:3px solid #2a5fa8"></div>
<div class="a" style="left:1899px;top:956px;width:41px;height:41px;border-radius:50%;background:#000;border:1px solid #5a8aa0"></div>
<svg style="left:1912px;top:968px" width="8" height="16" viewBox="0 0 8 16"><path d="M8 1L1.5 8L8 15" fill="none" stroke="#a0a0a0" stroke-width="2.2"/></svg>

<!-- taskbar -->
<div class="a" style="left:0;top:1030px;width:1920px;height:50px;background:#34454b"></div>
<div class="a" style="left:60px;top:1030px;width:430px;height:50px;background:#f2f2f2;border-bottom:1px solid #d8d8d8"></div>
<svg style="left:19px;top:1044px" width="22" height="22" viewBox="0 0 22 22" fill="#fff"><path d="M0.5 3.3L9.6 2V10.5H0.5Z M10.6 1.9L21.5 0.3V10.5H10.6Z M0.5 11.5H9.6V20L0.5 18.7Z M10.6 11.5H21.5V21.7L10.6 20.1Z"/></svg>
<svg style="left:74px;top:1042px" width="24" height="24" viewBox="0 0 24 24" fill="none" stroke="#1a1a1a" stroke-width="1.6"><circle cx="14" cy="9.5" r="6.8"/><path d="M9.2 14.3L1.5 22"/></svg>
<div class="t" style="left:110px;top:1046.5px;font-size:18.5px;color:#1a1a1a;will-change:auto">Type here to search</div>
<svg style="left:509px;top:1045px" width="21" height="21" viewBox="0 0 21 21"><circle cx="10.5" cy="10.5" r="8.7" fill="none" stroke="#fff" stroke-width="2"/></svg>
<svg style="left:569px;top:1044px" width="22" height="21" viewBox="0 0 22 21" fill="none" stroke="#fff" stroke-width="1.3"><path d="M0.7 0.7H13.3M0.7 20.3H13.3"/><rect x="1.5" y="4.5" width="11" height="12"/><path d="M19.5 0V6M19.5 9V12M19.5 15V21"/><rect x="18" y="6.5" width="3" height="2.5" fill="#fff" stroke="none"/></svg>
<!-- store -->
<svg style="left:628px;top:1040px" width="31" height="30" viewBox="0 0 31 30"><path d="M9 6V3Q9 1 11 1H20Q22 1 22 3V6" fill="none" stroke="#29a8e8" stroke-width="2"/><path d="M1 6H30V26Q30 29 27 29H4Q1 29 1 26Z" fill="#f4f4f4"/><rect x="9.5" y="11.5" width="5" height="5" fill="#f25022"/><rect x="15.5" y="11.5" width="5" height="5" fill="#7fba00"/><rect x="9.5" y="17.5" width="5" height="5" fill="#00a4ef"/><rect x="15.5" y="17.5" width="5" height="5" fill="#ffb900"/></svg>
<!-- explorer -->
<svg style="left:692px;top:1043px" width="28" height="23" viewBox="0 0 28 23"><path d="M0 1Q0 0 1 0H9L11 2H27Q28 2 28 3V5H0Z" fill="#e8a317"/><path d="M0 4H28V22Q28 23 27 23H1Q0 23 0 22Z" fill="#fcd462"/><path d="M5 23V13H23V23H18V17H10V23Z" fill="#2f86d8"/></svg>
<!-- office -->
<svg style="left:756px;top:1041px" width="23" height="28" viewBox="0 0 23 28"><path d="M0 5L14 0L23 3V25L14 28L0 23L14 25V4L5 7V21L0 23Z" fill="#e64a19"/><path d="M0 5L14 0V4L5 7V21L0 23Z" fill="#c8102e"/></svg>
<!-- mouse -->
<svg style="left:821px;top:1043px" width="17" height="24" viewBox="0 0 17 24"><rect x="0.5" y="0.5" width="16" height="23" rx="8" fill="#273034"/><path d="M8.5 1V9M1 9H16" stroke="#34454b" stroke-width="1"/></svg>
<!-- mail -->
<svg style="left:876px;top:1040px" width="32" height="30" viewBox="0 0 32 30"><path d="M0 8L16 0L32 8V29H0Z" fill="#0a5db8"/><path d="M4 10H28V16L16 24L4 16Z" fill="#f4f4f4"/><path d="M0 8L16 19L32 8V29H0Z" fill="#1d94e6"/><path d="M32 29H0L16 19L32 8Z" fill="#35b6f0"/></svg>
<!-- unity hub -->
<svg style="left:936px;top:1036px" width="36" height="38" viewBox="0 0 36 38"><path d="M17.8 4.9L29.9 11.6L17.8 18.3L5.6 11.6Z" fill="#fbfbfb"/><path d="M5.6 11.6L17.8 18.3V32.6L5.6 25.7Z" fill="#d9d9d9"/><path d="M29.9 11.6L17.8 18.3V32.6L29.9 25.7Z" fill="#b9b9b9"/><path d="M17.8 10.2L25.7 14.4V22.5L17.8 27.1L10.2 22.5V14.4Z" fill="#6a6a6a"/><path d="M17.8 18.3L25.7 14.4V22.5L17.8 27.1Z" fill="#0a0a0a"/><path d="M17.8 12.6L21.6 14.9L17.8 17.1L14 14.9Z" fill="#fafafa"/><path d="M17.3 10.5H18.3V13H17.3Z" fill="#fafafa"/><path d="M12 17.5L15.8 19.6V24.3L12 22.2Z" fill="#cfcfcf"/><path d="M23.8 17.5L19.8 19.6V24.3L23.8 22.2Z" fill="#b0b0b0"/></svg>
<!-- edge -->
<svg style="left:1000px;top:1039px" width="32" height="32" viewBox="0 0 32 32"><defs><linearGradient id="eg1" x1="0" y1="0.3" x2="1" y2="0.6"><stop offset="0" stop-color="#3cc6f8"/><stop offset="0.5" stop-color="#2cc3cc"/><stop offset="1" stop-color="#6ce23e"/></linearGradient></defs><circle cx="16" cy="16.3" r="15.2" fill="#0b86d8"/><path d="M0.9 15.5Q2.5 10 8 9.2Q13 8.8 17 11.8Q20.5 12.8 20.5 15.5Q20 17 18.2 17.8Q18.8 20.8 24 21.2Q28.5 21.2 31.1 19.6A15.2 15.2 0 0 0 0.9 15.5Z" fill="url(#eg1)"/><path d="M12.8 17.5Q12.8 12.5 17.3 12.3Q21 12.5 20.5 15.5Q20 17 18.2 17.8Q18.8 20.8 24 21.2Q28.5 21.2 31.1 19.6L30.6 22.8Q28 25 24 25Q14.5 25 12.8 17.5Z" fill="#34454b"/><path d="M10.8 17Q10.5 28.5 23 30Q28.5 29.5 30.6 22.8Q27 25.2 22.5 25Q14.5 24.8 12.8 17.5Z" fill="#0e52a0"/></svg>
<!-- unity active -->
<div class="a" style="left:1048px;top:1030px;width:61px;height:50px;background:#59666b"></div>
<div class="a" style="left:1063px;top:1040px;width:30px;height:30px;background:linear-gradient(135deg,#2a2a2a,#000)"></div>
<svg style="left:1066.8px;top:1044.4px" width="20.8" height="20.8" viewBox="0 0 80 80" fill="#f0f0f0"><use href="#unity"/></svg>
<!-- VS -->
<svg style="left:1125px;top:1040px" width="30" height="30" viewBox="0 0 30 30"><path d="M21 0L30 4V26L21 30L8 18L3 22L0 20.5V9.5L3 8L8 12ZM21 8L14 15L21 22Z" fill="#8c4fd8"/><path d="M21 0L30 4V26L21 30Z" fill="#b27cf0"/><path d="M0 9.5L3 8L8 12L4 15L3 14V16L4 15L8 18L3 22L0 20.5Z" fill="#6a2fc0"/></svg>
<div class="a" style="left:929px;top:1077px;width:51px;height:3px;background:#76b9ed"></div>
<div class="a" style="left:991px;top:1077px;width:51px;height:3px;background:#76b9ed"></div>
<div class="a" style="left:1048px;top:1077px;width:61px;height:3px;background:#76b9ed"></div>
<div class="a" style="left:1115px;top:1077px;width:51px;height:3px;background:#76b9ed"></div>
<!-- tray -->
<svg style="left:1420px;top:1036px" width="26" height="36" viewBox="0 0 26 36"><path d="M10.3 11.5V9.3A3.3 3.3 0 0 1 16.9 9.3V11.3" stroke="#8e8a86" stroke-width="2.2" fill="none"/><rect x="9" y="11" width="4.7" height="3.3" fill="#58b4f5"/><path d="M9.3 15H13.4Q15.3 20 14.9 24Q14.2 30 12 33.5H11.4Q8.6 30 8 24Q7.8 19 9.3 15Z" fill="#4aa8f2"/></svg>
<div class="t" style="left:1457px;top:1047.5px;font-size:18px;color:#fff">Rain to stop</div>
<svg style="left:1574px;top:1050px" width="17" height="10" viewBox="0 0 17 10"><path d="M1 9L8.5 1.5L16 9" fill="none" stroke="#fff" stroke-width="1.3"/></svg>
<svg style="left:1601px;top:1046px" width="23" height="19" viewBox="0 0 23 19"><path d="M1 13Q0 9 4 8Q6 2 12 3Q16 4 16 8Q19 8 19 11V13Z" fill="#c8c8c8"/><circle cx="15" cy="13" r="5.5" fill="#f0e000"/><rect x="14.2" y="9.5" width="1.6" height="4.5" fill="#222"/><rect x="14.2" y="15" width="1.6" height="1.6" fill="#222"/></svg>
<svg style="left:1635px;top:1046px" width="16" height="18" viewBox="0 0 16 18" fill="none" stroke="#fff" stroke-width="1.1"><path d="M2 3Q8 -1 14 3M2 15Q8 19 14 15"/><rect x="1" y="5" width="9" height="8"/><path d="M10 8L14.5 5.5V12.5L10 10"/></svg>
<svg style="left:1664px;top:1047px" width="18" height="17" viewBox="0 0 18 17" fill="none" stroke="#fff" stroke-width="1.1"><path d="M1 16Q1 1 16 1M4 16Q4 4 16 4M7 16Q7 7 16 7M10 16Q10 10 16 10"/><circle cx="15" cy="15" r="1.3" fill="#fff"/></svg>
<svg style="left:1691px;top:1046px" width="22" height="18" viewBox="0 0 22 18" fill="none" stroke="#fff" stroke-width="1.1"><path d="M1 6H5L10 1V17L5 12H1Z"/><path d="M13 6Q14.5 9 13 12M16 4Q18.5 9 16 14"/><path d="M19 1.5Q23 9 19 16.5" stroke="#8a9599"/></svg>
<div class="t" style="left:1725px;top:1048.5px;font-size:14.5px;color:#fff">ENG</div>
<div class="t" style="left:1790px;top:1035.5px;font-size:15px;color:#fff">07:12</div>
<div class="t" style="left:1769px;top:1058px;font-size:15.5px;color:#fff">01/05/2022</div>
<svg style="left:1860px;top:1036px" width="40" height="44" viewBox="0 0 40 44"><path d="M8.8 8.8H29.1V26H19L22 29.5L17.5 26H8.8Z" fill="#fff"/><path d="M13 13.4H25M13 17.5H25M13 21.5H21" stroke="#34454b" stroke-width="1"/><circle cx="28.5" cy="28.3" r="10.2" fill="#343b3e" stroke="#8a9292" stroke-width="1"/><path d="M28.5 18.1A10.2 10.2 0 0 0 19.5 23.5L28.5 28.3Z" fill="#8a8a8a"/><path d="M23.3 25.6L26.2 23.3H27.6V33.8H25.4V26.2L23.8 27.4Z M28.9 25.6L31.8 23.3H33.2V33.8H31V26.2L29.4 27.4Z" fill="#fff"/></svg>

<div class="a" style="left:1914px;top:1030px;width:1px;height:50px;background:#8a9599"></div>
</body></html>
